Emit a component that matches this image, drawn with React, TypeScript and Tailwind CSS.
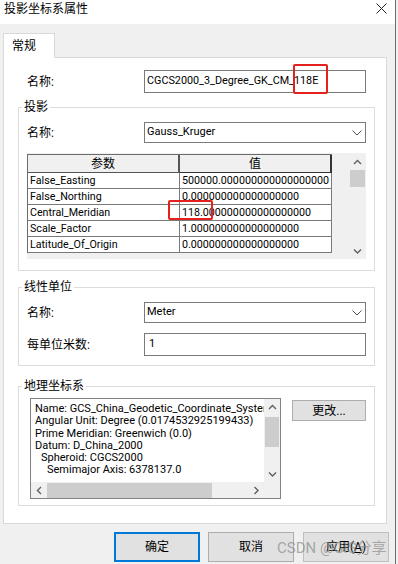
import React from 'react';

const params = [
  ['False_Easting', '500000.000000000000000000'],
  ['False_Northing', '0.000000000000000000'],
  ['Central_Meridian', '118.000000000000000000'],
  ['Scale_Factor', '1.000000000000000000'],
  ['Latitude_Of_Origin', '0.000000000000000000'],
];

const geoLines = [
  { text: 'Name: GCS_China_Geodetic_Coordinate_System_2000', indent: '' },
  { text: 'Angular Unit: Degree (0.0174532925199433)', indent: '' },
  { text: 'Prime Meridian: Greenwich (0.0)', indent: '' },
  { text: 'Datum: D_China_2000', indent: '' },
  { text: 'Spheroid: CGCS2000', indent: 'pl-[6px]' },
  { text: 'Semimajor Axis: 6378137.0', indent: 'pl-[12px]' },
];

const Arrow = ({ dir }: { dir: 'up' | 'down' | 'left' | 'right' }) => {
  const paths = {
    up: 'M1 5 L4.5 1.5 L8 5',
    down: 'M1 1.5 L4.5 5 L8 1.5',
    left: 'M5 1 L1.5 4.5 L5 8',
    right: 'M1.5 1 L5 4.5 L1.5 8',
  };
  const vertical = dir === 'up' || dir === 'down';
  return (
    <svg
      width={vertical ? 9 : 6.5}
      height={vertical ? 6.5 : 9}
      viewBox={vertical ? '0 0 9 6.5' : '0 0 6.5 9'}
      fill="none"
    >
      <path d={paths[dir]} stroke="#606060" strokeWidth="1.4" />
    </svg>
  );
};

const Combo = ({ value }: { value: string }) => (
  <div className="w-[222px] h-[21px] bg-white border border-[#7a7a7a] flex items-center pl-[2px] pr-[3px] text-[11px]">
    <span className="flex-1">{value}</span>
    <svg width="10" height="6" viewBox="0 0 10 6" fill="none">
      <path d="M0.5 0.5 L5 5 L9.5 0.5" stroke="#555" strokeWidth="1" />
    </svg>
  </div>
);

const Group = ({ title, children, className }: { title: string; children: React.ReactNode; className: string }) => (
  <fieldset className={`ml-[14px] w-[357px] border border-[#dcdcdc] ${className}`}>
    <legend className="ml-[3px] px-[2px] text-[12px] leading-[16px]">{title}</legend>
    {children}
  </fieldset>
);

export default function App() {
  return (
    <div className="relative w-[398px] h-[564px] overflow-hidden bg-[#f0f0f0] text-black font-[Roboto,'Noto_Sans_CJK_SC',sans-serif]">
      <div className="w-[396px] h-full border-r border-[#6e6e6e] flex flex-col">
        {/* title bar */}
        <div className="h-[24px] shrink-0 bg-white flex items-start justify-between pl-[4px] pr-[8px]">
          <span className="text-[12px] leading-[16px] mt-[1px]">投影坐标系属性</span>
          <svg className="mt-[3px]" width="11" height="11" viewBox="0 0 11 11" fill="none">
            <path d="M0.5 0.5 L10.5 10.5 M10.5 0.5 L0.5 10.5" stroke="#222" strokeWidth="1" />
          </svg>
        </div>

        <div className="pl-[3px] pt-[9px]">
          {/* tab */}
          <div className="relative z-10 w-[52px] h-[25px] -mb-px bg-white border border-b-0 border-[#d9d9d9] flex items-center pl-[8px] text-[12px]">
            常规
          </div>

          {/* tab panel */}
          <div className="w-[384px] h-[467px] bg-white border border-[#d9d9d9] pt-[12px]">
            <div className="flex items-center pl-[23px]">
              <span className="w-[117px] text-[12px]">名称:</span>
              <div className="w-[222px] h-[23px] border border-[#7a7a7a] flex items-center pl-[2px] text-[10.8px]">
                CGCS2000_3_Degree_GK_CM_118E
              </div>
            </div>

            <Group title="投影" className="mt-[6px]">
              <div className="pl-[8px] pt-[7px] pb-[11px]">
                <div className="flex items-center">
                  <span className="w-[117px] text-[12px]">名称:</span>
                  <Combo value="Gauss_Kruger" />
                </div>
                <div className="mt-[10px] w-[339px] h-[106px] bg-[#f0f0f0] flex pt-[1px]">
                  <div className="w-[305px] self-start border-l border-t border-[#6b6b6b] text-[10.7px]">
                    <div className="flex h-[18px]">
                      <div className="w-[152px] border-r-2 border-b border-[#555] flex items-center justify-center text-[12px]">参数</div>
                      <div className="w-[152px] border-r-2 border-b border-[#333] flex items-center justify-center text-[12px]">值</div>
                    </div>
                    {params.map(([k, v]) => (
                      <div key={k} className="flex h-[16px] bg-white">
                        <div className="w-[152px] border-r border-b border-[#7a7a7a] pl-[2px] leading-[15px] whitespace-nowrap overflow-hidden">{k}</div>
                        <div className="w-[152px] border-r border-b border-[#7a7a7a] pl-[2px] leading-[15px] whitespace-nowrap overflow-hidden">{v}</div>
                      </div>
                    ))}
                  </div>
                  <div className="ml-auto w-[17px] h-full flex flex-col">
                    <div className="h-[16px] flex items-center justify-center"><Arrow dir="up" /></div>
                    <div className="h-[17px] mx-[1px] bg-[#cdcdcd]" />
                    <div className="flex-1" />
                    <div className="h-[16px] flex items-center justify-center"><Arrow dir="down" /></div>
                  </div>
                </div>
              </div>
            </Group>

            <Group title="线性单位" className="mt-[8px]">
              <div className="pl-[8px] pt-[7px] pb-[9px]">
                <div className="flex items-center">
                  <span className="w-[117px] text-[12px]">名称:</span>
                  <Combo value="Meter" />
                </div>
                <div className="mt-[10px] flex items-center">
                  <span className="w-[117px] text-[12px]">每单位米数:</span>
                  <div className="w-[222px] h-[23px] border border-[#7a7a7a] flex items-center pl-[4px] text-[11px]">1</div>
                </div>
              </div>
            </Group>

            <Group title="地理坐标系" className="mt-[12px]">
              <div className="pl-[11px] pt-[4px] pb-[6px] flex items-start">
                <div className="w-[251px] h-[101px] border border-[#828282] flex flex-col">
                  <div className="flex flex-1 min-h-0">
                    <div className="flex-1 overflow-hidden pl-[4px] pt-[4px] text-[11px] leading-[12.25px] whitespace-nowrap">
                      {geoLines.map((l) => (
                        <div key={l.text} className={l.indent}>{l.text}</div>
                      ))}
                    </div>
                    <div className="w-[16px] bg-[#f0f0f0] flex flex-col">
                      <div className="h-[16px] flex items-center justify-center"><Arrow dir="up" /></div>
                      <div className="h-[2px]" />
                      <div className="h-[30px] mx-[1px] bg-[#cdcdcd]" />
                      <div className="flex-1" />
                      <div className="h-[16px] flex items-center justify-center"><Arrow dir="down" /></div>
                    </div>
                  </div>
                  <div className="h-[16px] flex">
                    <div className="flex-1 bg-[#f0f0f0] flex items-center">
                      <div className="w-[16px] flex justify-center"><Arrow dir="left" /></div>
                      <div className="w-[165px] h-[15px] bg-[#cdcdcd]" />
                      <div className="flex-1" />
                      <div className="w-[16px] flex justify-center"><Arrow dir="right" /></div>
                    </div>
                    <div className="w-[16px] bg-[#f0f0f0]" />
                  </div>
                </div>
                <button className="ml-[11px] mt-[2px] w-[74px] h-[21px] bg-[#e1e1e1] border border-[#adadad] text-[12px] flex items-center justify-center">
                  更改...
                </button>
              </div>
            </Group>
          </div>

          {/* dialog buttons */}
          <div className="mt-[8px] flex pl-[111px] gap-[8px]">
            <button className="w-[86px] h-[30px] bg-[#e1e1e1] border-2 border-[#0078d7] text-[12px]">确定</button>
            <button className="w-[86px] h-[30px] bg-[#e1e1e1] border border-[#adadad] text-[12px]">取消</button>
            <button className="ml-px w-[86px] h-[30px] bg-[#e1e1e1] border border-[#bfbfbf] text-[12px]">
              应用(<span className="underline">A</span>)
            </button>
          </div>
        </div>
      </div>

      {/* watermark */}
      <div className="absolute left-[277px] top-[538px] text-[15px] leading-[20px] text-[rgba(130,130,130,0.65)] pointer-events-none">
        CSDN @GIS分享
      </div>

      {/* red annotation boxes */}
      <div className="absolute left-[293px] top-[64px] w-[35px] h-[30px] border-2 border-[#e5211d] rounded-[2px]" />
      <div className="absolute left-[168px] top-[200px] w-[45px] h-[20px] border-2 border-[#e5211d] rounded-[2px]" />
    </div>
  );
}
